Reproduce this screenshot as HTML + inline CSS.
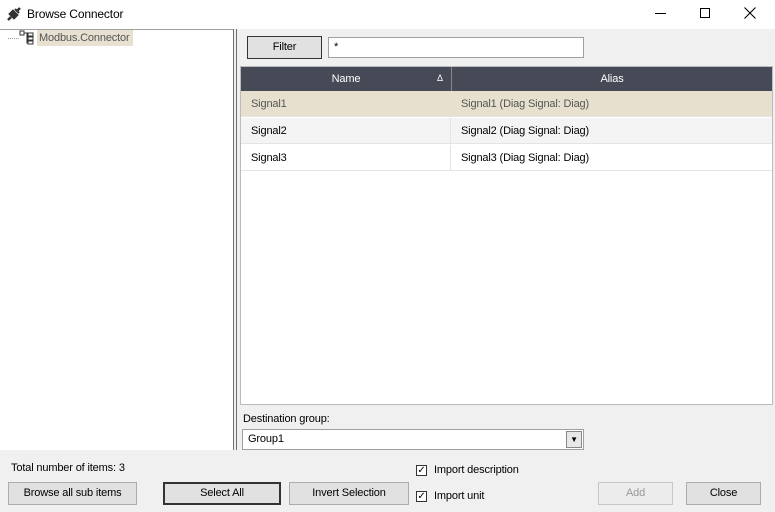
<!DOCTYPE html>
<html><head><style>
*{margin:0;padding:0;box-sizing:border-box}
body{width:775px;height:512px;background:#f0f0f0;font-family:"Liberation Sans",sans-serif;font-size:11px;letter-spacing:-0.15px;color:#000;position:relative;overflow:hidden}
.a{position:absolute}
.btn{position:absolute;background:#e1e1e1;border:1px solid #adadad;text-align:center;line-height:20px;font-size:11px}
.cell{position:absolute;height:26px;line-height:26px;padding-left:10px;border-bottom:1px solid #e4e4e4}
.cb{position:absolute;width:11px;height:11px;border:1px solid #333;background:#fff;font-size:10px;line-height:9px;text-align:center}
</style></head><body>
<div class="a" style="left:0;top:0;width:775px;height:29px;background:#fff"></div>
<svg class="a" style="left:6px;top:6px" width="16" height="16" viewBox="0 0 16 16"><path d="M2 14l3-3M11 5l3-3M4 8l4 4 3-3-4-4z" stroke="#333" stroke-width="2.5" fill="#333"/><path d="M9 3l4 4" stroke="#333" stroke-width="2"/></svg>
<div class="a" style="left:27px;top:7px;font-size:12px">Browse Connector</div>
<div class="a" style="left:655px;top:13px;width:11px;height:1px;background:#000"></div>
<div class="a" style="left:700px;top:8px;width:10px;height:10px;border:1px solid #000"></div>
<svg class="a" style="left:744px;top:7px" width="12" height="12"><path d="M0.5 0.5L11.5 11.5M11.5 0.5L0.5 11.5" stroke="#000" stroke-width="1.1"/></svg>
<div class="a" style="left:0;top:29px;width:233px;height:421px;background:#fff;border-top:1px solid #a0a0a0"></div>
<div class="a" style="left:233px;top:29px;width:1px;height:421px;background:#6d6d6d"></div>
<div class="a" style="left:236px;top:29px;width:1px;height:421px;background:#6d6d6d"></div>
<div class="a" style="left:8px;top:38px;width:11px;border-top:1px dotted #999"></div>
<svg class="a" style="left:19px;top:30px" width="16" height="16"><rect x="1" y="1" width="4" height="4" fill="none" stroke="#333"/><rect x="9" y="3" width="5" height="3" fill="none" stroke="#333"/><rect x="9" y="7" width="5" height="3" fill="none" stroke="#333"/><rect x="9" y="11" width="5" height="3" fill="none" stroke="#333"/><path d="M5 3h3v10h1M8 8h1" stroke="#333" fill="none"/></svg>
<div class="a" style="left:37px;top:30px;width:96px;height:16px;background:#e8e1d2;color:#555;line-height:16px;padding-left:2px">Modbus.Connector</div>
<div class="btn" style="left:247px;top:36px;width:75px;height:23px;line-height:21px;border-color:#333">Filter</div>
<div class="a" style="left:328px;top:37px;width:256px;height:21px;background:#fff;border:1px solid #a0a0a0;padding-left:5px;line-height:18px">*</div>
<div class="a" style="left:240px;top:66px;width:533px;height:339px;background:#fff;border:1px solid #bbb"></div>
<div class="a" style="left:241px;top:67px;width:531px;height:24px;background:#464a57"></div>
<div class="a" style="left:451px;top:67px;width:1px;height:24px;background:#888"></div>
<div class="a" style="left:241px;top:67px;width:210px;line-height:24px;text-align:center;color:#fff">Name</div>
<div class="a" style="left:437px;top:67px;line-height:22px;color:#fff;font-size:9px">&#916;</div>
<div class="a" style="left:452px;top:67px;width:320px;line-height:24px;text-align:center;color:#fff">Alias</div>
<div class="cell" style="left:241px;top:91px;width:531px;background:#e8e0cf"></div>
<div class="cell" style="left:241px;top:91px;width:210px;color:#555;border:0">Signal1</div>
<div class="cell" style="left:451px;top:91px;width:321px;color:#555;border:0">Signal1 (Diag Signal: Diag)</div>
<div class="cell" style="left:241px;top:118px;width:210px;background:#f4f4f4;border-right:1px solid #e4e4e4">Signal2</div>
<div class="cell" style="left:451px;top:118px;width:321px;background:#f4f4f4">Signal2 (Diag Signal: Diag)</div>
<div class="cell" style="left:241px;top:145px;width:210px;border-right:1px solid #e4e4e4">Signal3</div>
<div class="cell" style="left:451px;top:145px;width:321px">Signal3 (Diag Signal: Diag)</div>
<div class="a" style="left:243px;top:413px">Destination group:</div>
<div class="a" style="left:242px;top:429px;width:342px;height:21px;background:#fff;border:1px solid #a0a0a0;padding-left:5px;line-height:19px">Group1</div>
<div class="a" style="left:566px;top:431px;width:16px;height:17px;border:1px solid #888;background:#e8e8e8;font-size:8px;text-align:center;line-height:16px">&#9660;</div>
<div class="a" style="left:11px;top:462px">Total number of items: 3</div>
<div class="btn" style="left:8px;top:482px;width:129px;height:23px">Browse all sub items</div>
<div class="btn" style="left:163px;top:482px;width:118px;height:23px;border:2px solid #333;line-height:19px">Select All</div>
<div class="btn" style="left:289px;top:482px;width:120px;height:23px">Invert Selection</div>
<div class="cb" style="left:416px;top:465px">&#10003;</div>
<div class="a" style="left:434px;top:464px">Import description</div>
<div class="cb" style="left:416px;top:491px">&#10003;</div>
<div class="a" style="left:434px;top:490px">Import unit</div>
<div class="btn" style="left:598px;top:482px;width:75px;height:23px;color:#999;border-color:#c8c8c8;background:#ececec">Add</div>
<div class="btn" style="left:686px;top:482px;width:75px;height:23px">Close</div>
</body></html>
